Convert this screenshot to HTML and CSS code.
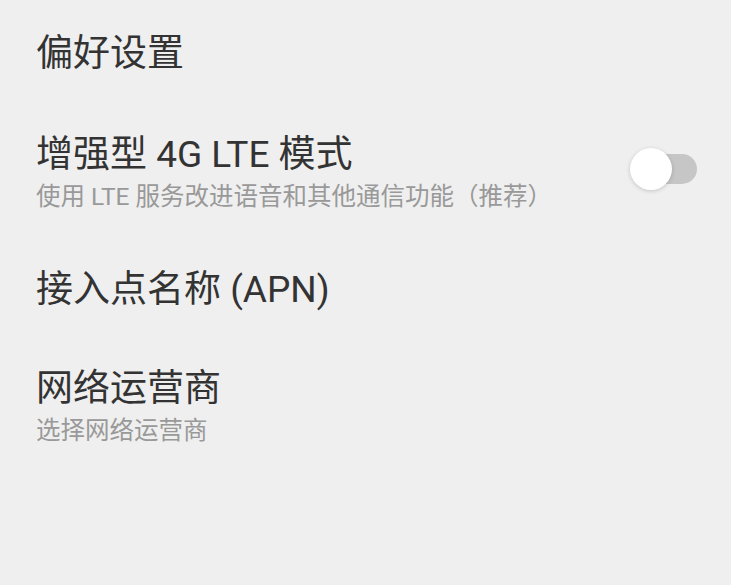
FILE: index.html
```html
<!DOCTYPE html>
<html lang="zh-CN">
<head>
    <meta charset="UTF-8">
    <title>偏好设置</title>
    <link rel="stylesheet" href="styles.css">
</head>
<body>
    <div class="pref">
        <div class="pref-head">偏好设置</div>

        <!-- 增强型 4G LTE -->
        <div class="item">
            <div class="txt">
                <div class="tit">增强型 4G LTE 模式</div>
                <div class="sub">使用 LTE 服务改进语音和其他通信功能（推荐）</div>
            </div>
            <div class="sw"><span class="thumb"></span></div>
        </div>

        <div class="item">
            <div class="txt">
                <div class="tit">接入点名称 (APN)</div>
            </div>
        </div>

        <div class="item last">
            <div class="txt">
                <div class="tit">网络运营商</div>
                <div class="sub">选择网络运营商</div>
            </div>
        </div>
    </div>
</body>
</html>
```

FILE: styles.css
```css
html, body{
    margin: 0;
    background: #efefef;
}
body{
    font-family: Roboto, "Noto Sans CJK SC", sans-serif;
    width: 731px;
    height: 585px;
    overflow: hidden;
}

.pref{
    padding: 32px 34px 0 36px;
}

.pref-head{
    font-size: 37px;
    line-height: 44px;
    color: #333;
    margin-bottom: 31px;
}

.item{
    display: flex;
    align-items: flex-start;
    padding: 26px 0;
}
.item.last{
    margin-top: 3px;
}
.txt{
    flex: 1;
}
.tit{
    font-size: 37px;
    line-height: 44px;
    color: #333;
}
.sub{
    font-size: 24.5px;
    line-height: 39px;
    color: #999;
}

/* 스위치 (꺼짐) */
.sw{
    position: relative;
    width: 67px;
    height: 42px;
    margin-top: 15px;
}
.sw::before{
    content: "";
    position: absolute;
    top: 6px;
    left: 4px;
    right: 0;
    height: 30px;
    border-radius: 15px;
    background: #c6c6c6;
}
.sw .thumb{
    position: absolute;
    top: 0;
    left: 0;
    width: 42px;
    height: 42px;
    border-radius: 50%;
    background: #fff;
    box-shadow: 0 1px 4px rgba(0,0,0,.18);
}
```
